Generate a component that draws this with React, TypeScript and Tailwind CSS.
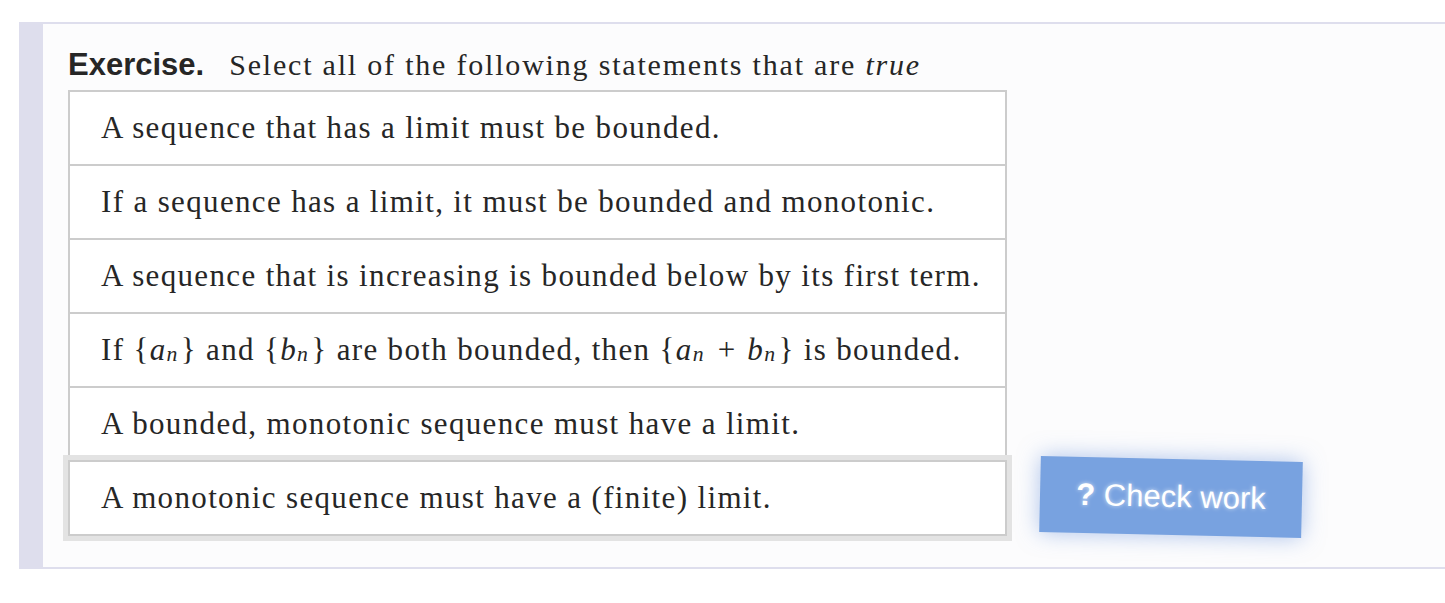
import type { ReactNode } from "react";

const serif = "font-['Liberation_Serif',serif]";

function Sub({ v, n = "n" }: { v: string; n?: string }) {
  return (
    <span className="whitespace-nowrap pr-[2px]">
      <i>{v}</i>
      <sub className="text-[0.7em] italic relative -bottom-[0.05em]">{n}</sub>
    </span>
  );
}

const rows: ReactNode[] = [
  "A sequence that has a limit must be bounded.",
  "If a sequence has a limit, it must be bounded and monotonic.",
  "A sequence that is increasing is bounded below by its first term.",
  <>
    If {"{"}
    <Sub v="a" />
    {"}"} and {"{"}
    <Sub v="b" />
    {"}"} are both bounded, then {"{"}
    <Sub v="a" />
    <span className="mx-[0.35em]">+</span>
    <Sub v="b" />
    {"}"} is bounded.
  </>,
  "A bounded, monotonic sequence must have a limit.",
  "A monotonic sequence must have a (finite) limit.",
];

export default function App() {
  return (
    <div className="min-h-screen bg-white pt-[22px] pl-[19px]">
      <div className="flex border-y-2 border-[#dedeed]">
        <div className="w-[24px] bg-[#dedeed]" />
        <div className="flex-1 bg-[#fcfcfd] pl-[25px] pt-[18px] pb-[31px]">
          <h2 className="flex items-baseline h-[48px] text-[#262626]">
            <span className="font-['Liberation_Sans',sans-serif] font-bold text-[31px]">Exercise.</span>
            <span className={`${serif} text-[30px] tracking-[1.8px] ml-[25px]`}>
              Select all of the following statements that are <i>true</i>
            </span>
          </h2>
          <div className="flex items-end">
            <div className="w-[939px] border-x-2 border-[#cccccc] bg-white">
              {rows.map((r, i) => (
                <div
                  key={i}
                  className={`relative flex items-center h-[74px] border-t-2 border-[#cccccc] pl-[31px] ${serif} text-[31px] tracking-[1.35px] text-[#262626] ${
                    i === rows.length - 1
                      ? "border-b-2 -mx-[2px] border-x-2 shadow-[0_0_0_5px_#e3e3e3] h-[76px]"
                      : ""
                  }`}
                >
                  {r}
                </div>
              ))}
            </div>
            <button className="ml-[33px] mb-[1px] w-[262px] h-[76px] rotate-[1.3deg] bg-[#78a2e0] text-white font-['Liberation_Sans',sans-serif] text-[31px] shadow-[0_0_22px_rgba(110,150,220,0.55)] [text-shadow:0_0_4px_rgba(255,255,255,0.7)]">
              <b>?</b> Check work
            </button>
          </div>
        </div>
      </div>
    </div>
  );
}
